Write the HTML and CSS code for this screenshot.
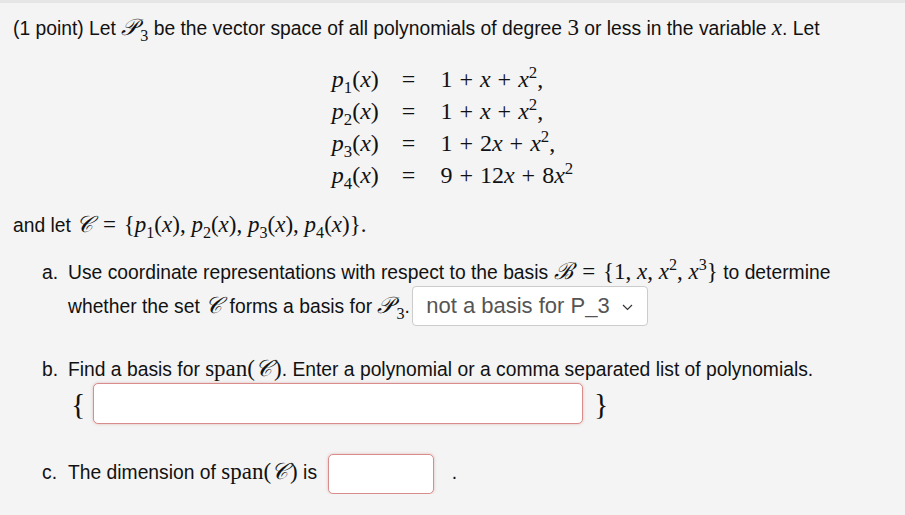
FILE: index.html
```html
<!DOCTYPE html>
<html lang="en">
<head>
    <meta charset="UTF-8">
    <title>Problem 1</title>
    <link rel="stylesheet" href="styles.css">
</head>
<body>
    <div class="problem">
        <p class="intro">(1 point) Let <span class="m"><span class="cal">𝒫</span><sub>3</sub></span> be the vector space of all polynomials of degree <span class="m">3</span> or less in the variable <span class="m"><i>x</i></span>. Let</p>

        <table class="eqn">
            <tr>
                <td class="lhs"><i>p</i><sub>1</sub>(<i>x</i>)</td>
                <td class="eq">=</td>
                <td class="rhs">1 <b>+</b> <i>x</i> <b>+</b> <i>x</i><sup>2</sup>,</td>
            </tr>
            <tr>
                <td class="lhs"><i>p</i><sub>2</sub>(<i>x</i>)</td>
                <td class="eq">=</td>
                <td class="rhs">1 <b>+</b> <i>x</i> <b>+</b> <i>x</i><sup>2</sup>,</td>
            </tr>
            <tr>
                <td class="lhs"><i>p</i><sub>3</sub>(<i>x</i>)</td>
                <td class="eq">=</td>
                <td class="rhs">1 <b>+</b> 2<i>x</i> <b>+</b> <i>x</i><sup>2</sup>,</td>
            </tr>
            <tr>
                <td class="lhs"><i>p</i><sub>4</sub>(<i>x</i>)</td>
                <td class="eq">=</td>
                <td class="rhs">9 <b>+</b> 12<i>x</i> <b>+</b> 8<i>x</i><sup>2</sup></td>
            </tr>
        </table>

        <p class="setline">and let <span class="m"><span class="cal">𝒞</span> <b>=</b> {<i>p</i><sub>1</sub>(<i>x</i>), <i>p</i><sub>2</sub>(<i>x</i>), <i>p</i><sub>3</sub>(<i>x</i>), <i>p</i><sub>4</sub>(<i>x</i>)}.</span></p>

        <div class="part part-a">
            <span class="label">a.</span>
            <div class="body">
                Use coordinate representations with respect to the basis <span class="m"><span class="cal">ℬ</span> <b>=</b> {1, <i>x</i>, <i>x</i><sup>2</sup>, <i>x</i><sup>3</sup>}</span> to determine<br>
                whether the set <span class="m"><span class="cal">𝒞</span></span> forms a basis for <span class="m"><span class="cal">𝒫</span><sub>3</sub></span>.
                <span class="select">not a basis for P_3
                    <svg class="chev" width="11" height="7" viewBox="0 0 11 7"><path d="M1 1 L5.5 5.5 L10 1" fill="none" stroke="#333" stroke-width="1.2"/></svg>
                </span>
            </div>
        </div>

        <div class="part part-b">
            <span class="label">b.</span>
            <div class="body">
                Find a basis for <span class="m">span(<span class="cal">𝒞</span>)</span>. Enter a polynomial or a comma separated list of polynomials.
                <div class="answer-row">
                    <span class="brace">{</span>
                    <span class="field wide"></span>
                    <span class="brace">}</span>
                </div>
            </div>
        </div>

        <div class="part part-c">
            <span class="label">c.</span>
            <div class="body">
                The dimension of <span class="m">span(<span class="cal">𝒞</span>)</span> is
                <span class="field small"></span>
                <span class="dot">.</span>
            </div>
        </div>
    </div>
</body>
</html>
```

FILE: styles.css
```css
body {
    margin: 0;
    padding: 0;
    background-color: #f4f4f4;
    color: #111;
    font-family: "Liberation Sans", Arial, sans-serif;
    font-size: 19.3px;
}

.problem {
    border-top: 3px solid #e6e6e6;
    padding: 13px 13px 0 13px;
}

p {
    margin: 0;
}

/* math bits */
.m {
    font-family: "Liberation Serif", "DejaVu Serif", serif;
    font-size: 23px;
    line-height: 1;
}

.m i, .eqn i {
    font-family: "Liberation Serif", serif;
}

.m b, .eqn b {
    font-weight: normal;
    padding: 0 2px;
}

.cal {
    font-family: "DejaVu Serif", "Liberation Serif", serif;
    font-style: italic;
    margin-right: 2px;
}

sub, sup {
    font-size: 0.7em;
    line-height: 0;
}

.intro {
    line-height: 26px;
}

.eqn {
    margin: 21px auto 0 auto;
    border-collapse: collapse;
    font-family: "Liberation Serif", serif;
    font-size: 24px;
}

.eqn td {
    height: 32px;
    padding: 0;
}

.eqn .lhs {
    text-align: right;
}

.eqn .eq {
    padding: 0 25px 0 23px;
}

.eqn .rhs {
    text-align: left;
}

.eqn b {
    padding: 0 1px;
}

.setline {
    margin-top: 20px;
    line-height: 30px;
}

.part {
    display: flex;
    margin-left: 29px;
}

.part .label {
    width: 26px;
}

.part .body {
    flex: 1;
}

.part-a {
    margin-top: 15px;
    line-height: 34px;
}

.select {
    display: inline-block;
    box-sizing: border-box;
    height: 40px;
    line-height: 37px;
    padding: 0 14px 0 13px;
    margin: -4px 0 -4px -3px;
    border: 1px solid #ccc;
    border-radius: 4px;
    background-color: #fff;
    color: #555;
    font-size: 22px;
    vertical-align: baseline;
}

.select .chev {
    margin-left: 6px;
    vertical-align: middle;
}

.part-b {
    margin-top: 33px;
    line-height: 26px;
}

.answer-row {
    display: flex;
    align-items: center;
    margin-top: 0;
}

.brace {
    font-family: "Liberation Serif", serif;
    font-size: 30px;
    width: 22px;
    padding-left: 3px;
}

.brace:last-child {
    padding-left: 11px;
}

.field {
    display: inline-block;
    box-sizing: border-box;
    height: 41px;
    border: 1px solid #d98c8c;
    border-radius: 5px;
    background-color: #fff;
    box-shadow: 0 0 3px rgba(200, 80, 80, 0.35);
}

.field.wide {
    width: 490px;
}

.part-c {
    margin-top: 28px;
    line-height: 42px;
}

.field.small {
    width: 106px;
    height: 40px;
    vertical-align: -15px;
    margin-left: 6px;
}

.dot {
    margin-left: 12px;
}
```
